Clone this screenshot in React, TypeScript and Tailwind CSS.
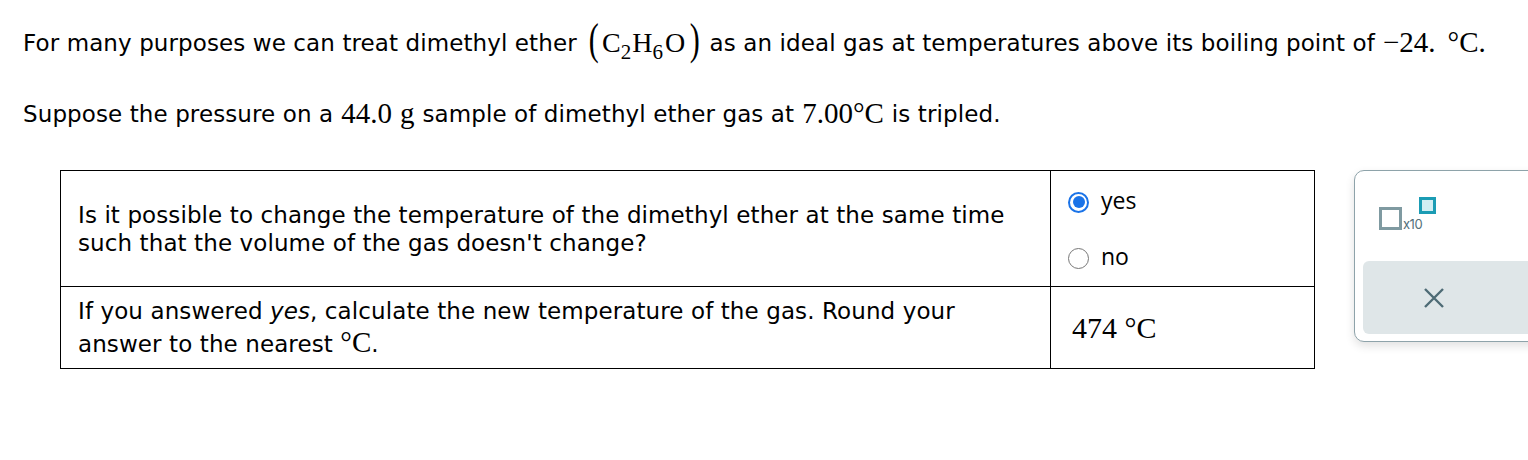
import React from "react";

const serif = { fontFamily: '"Liberation Serif", "Times New Roman", serif' };

const M = ({ children, className = "" }: { children: React.ReactNode; className?: string }) => (
  <span className={"text-[29px] tracking-normal " + className} style={serif}>{children}</span>
);

export default function App() {
  return (
    <div className="w-[1528px] h-[460px] overflow-hidden bg-white text-black" style={{ fontFamily: '"DejaVu Sans", Verdana, sans-serif' }}>
      <div className="pl-[23px] pt-[24px] text-[23px] tracking-[0.1px]">
        <p className="flex items-center h-[38px] whitespace-nowrap">
          <span>For many purposes we can treat dimethyl ether</span>
          <span className="inline-flex items-center ml-[10px] mr-[8px] tracking-normal" style={serif}>
            <span className="text-[40px] leading-none -mt-[6px] scale-x-75 scale-y-110">(</span>
            <span className="text-[28px] ml-[2px]">C</span>
            <span className="text-[21px] relative top-[10px]">2</span>
            <span className="text-[28px] ml-[1px]">H</span>
            <span className="text-[21px] relative top-[10px]">6</span>
            <span className="text-[28px] ml-[2px]">O</span>
            <span className="text-[40px] leading-none -mt-[6px] ml-[3px] scale-x-75 scale-y-110">)</span>
          </span>
          <span>as an ideal gas at temperatures above its boiling point of</span>
          <M className="ml-[8px]">−24.</M>
          <M className="ml-[12px]">°C.</M>
        </p>
        <p className="mt-[33px] h-[38px] flex items-center whitespace-nowrap">
          <span>Suppose the pressure on a</span>
          <M className="ml-[8px]">44.0</M>
          <M className="ml-[8px]">g</M>
          <span className="ml-[8px]">sample of dimethyl ether gas at</span>
          <M className="ml-[8px]">7.00°C</M>
          <span className="ml-[8px]">is tripled.</span>
        </p>
      </div>
      <div className="flex items-start mt-[37px] pl-[60px]">
        <table className="border-collapse border border-black w-[1255px] shrink-0 text-[23px] tracking-[0.1px]">
          <tbody>
            <tr className="h-[116px]">
              <td className="border border-black w-[990px] pl-[17px] pr-4 align-middle leading-[28px]">
                Is it possible to change the temperature of the dimethyl ether at the same time<br />
                such that the volume of the gas doesn't change?
              </td>
              <td className="border border-black pl-[17px] align-top tracking-normal" style={{ fontFamily: '"Open Sans", "Noto Sans", sans-serif' }}>
                <div className="flex items-center h-[22px] mt-[20px] gap-[12px]">
                  <span className="w-[21px] h-[21px] rounded-full border-2 border-[#1a73e8] flex items-center justify-center">
                    <span className="w-[12px] h-[12px] rounded-full bg-[#1a73e8]" />
                  </span>
                  <span className="text-[23px] leading-none -mt-[4px]">yes</span>
                </div>
                <div className="flex items-center h-[22px] mt-[34px] gap-[12px]">
                  <span className="w-[21px] h-[21px] rounded-full border-[1.5px] border-[#777]" />
                  <span className="text-[23px] leading-none -mt-[4px]">no</span>
                </div>
              </td>
            </tr>
            <tr className="h-[82px]">
              <td className="border border-black pl-[17px] pr-4 align-middle leading-[31px]">
                If you answered <i>yes</i>, calculate the new temperature of the gas. Round your<br />
                answer to the nearest <M>°C</M>.
              </td>
              <td className="border border-black pl-[21px] align-middle">
                <span className="text-[30px] tracking-normal" style={serif}>474 °C</span>
              </td>
            </tr>
          </tbody>
        </table>
        <div className="ml-[39px] w-[220px] h-[172px] shrink-0 rounded-[10px] border border-[#8ea3aa] bg-white shadow-[0_4px_10px_rgba(0,0,0,0.12)] pl-[8px] pt-[26px]">
          <div className="relative h-[64px]">
            <div className="absolute left-[16px] top-[10px] w-[23px] h-[23px] border-[3px] border-[#7f9aa1] bg-white" />
            <span className="absolute left-[40px] top-[18px] text-[13px] text-[#53707a] tracking-[-0.5px]" style={{ fontFamily: '"Inter", sans-serif' }}>x10</span>
            <div className="absolute left-[56px] top-[0px] w-[17px] h-[17px] border-[3px] border-[#1b9cb4] bg-[#d2eef3]" />
          </div>
          <div className="w-[200px] h-[73px] rounded-[6px] bg-[#dfe6e8] flex items-center pl-[59px]">
            <svg width="24" height="24" viewBox="0 0 24 24" fill="none" stroke="#4e6b75" strokeWidth="2.4">
              <path d="M3 3 L21 21 M21 3 L3 21" />
            </svg>
          </div>
        </div>
      </div>
    </div>
  );
}
